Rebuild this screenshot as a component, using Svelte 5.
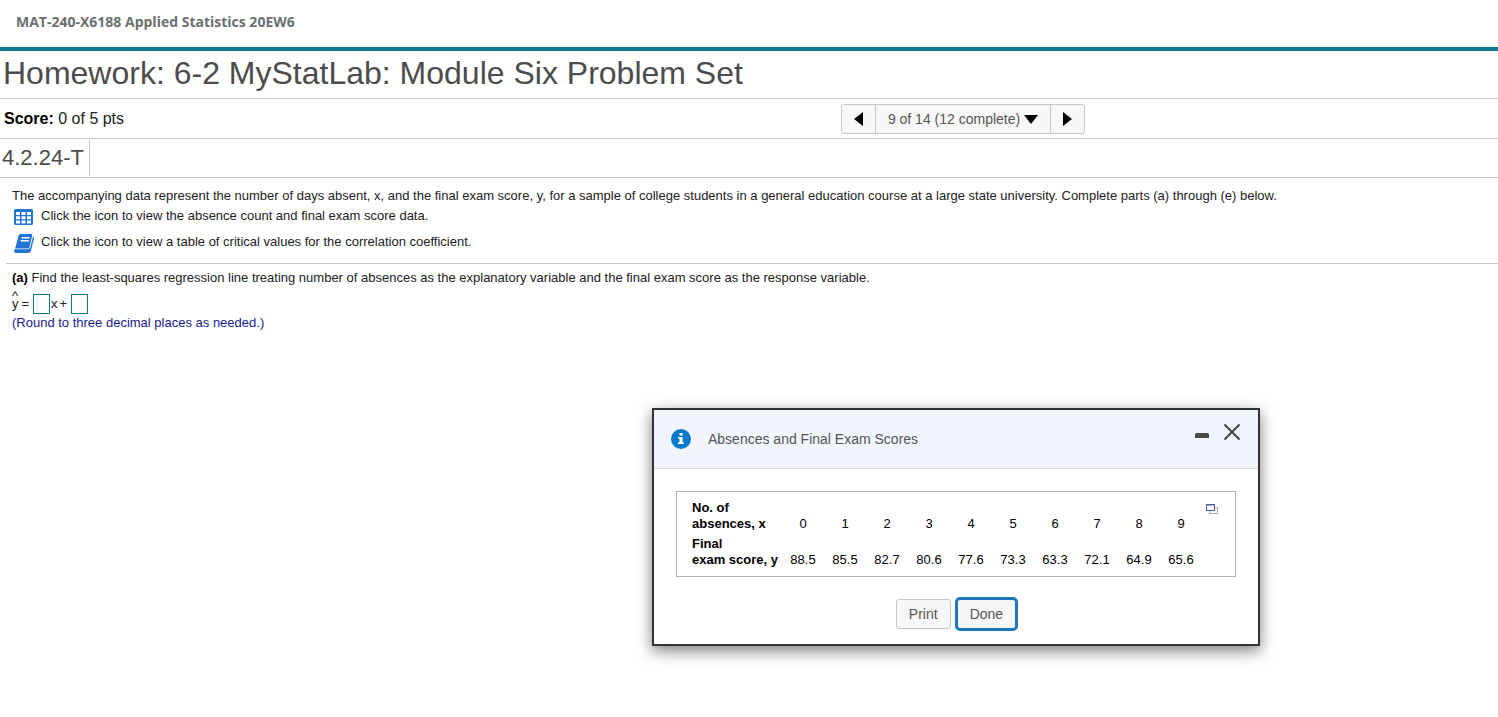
<script>
  const absences = [0, 1, 2, 3, 4, 5, 6, 7, 8, 9];
  const scores = ['88.5', '85.5', '82.7', '80.6', '77.6', '73.3', '63.3', '72.1', '64.9', '65.6'];

  let slope = $state('');
  let intercept = $state('');
  let open = $state(true);
</script>

<div class="page">
  <header class="course">MAT-240-X6188 Applied Statistics 20EW6</header>

  <h1>Homework: 6-2 MyStatLab: Module Six Problem Set</h1>

  <div class="score-row">
    <div class="score"><b>Score:</b> 0 of 5 pts</div>
    <nav class="pager">
      <button type="button" aria-label="Previous question">
        <svg width="10" height="14" viewBox="0 0 10 14"><path d="M10 0v14L1 7z" /></svg>
      </button>
      <button type="button" class="current">
        <span>9 of 14 (12 complete)</span>
        <svg width="14" height="10" viewBox="0 0 14 10"><path d="M0 1h14L7 10z" /></svg>
      </button>
      <button type="button" aria-label="Next question">
        <svg width="10" height="14" viewBox="0 0 10 14"><path d="M0 0v14l9-7z" /></svg>
      </button>
    </nav>
  </div>

  <div class="exercise-row">
    <h2>4.2.24-T</h2>
  </div>

  <main>
    <p class="intro">The accompanying data represent the number of days absent, x, and the final exam score, y, for a sample of college students in a general education course at a large state university. Complete parts (a) through (e) below.</p>
    <div class="resource">
      <button type="button" class="icon" aria-label="View data" onclick={() => (open = true)}>
        <svg width="20" height="17" viewBox="0 0 20 17">
          <rect width="19" height="16" rx="1.5" fill="#1f74d4" />
          <path fill="#fff" d="M2 3h4v3H2zM7.500 3h4v3h-4zM13 3h4v3h-4zM2 7.200h4v3H2zM7.500 7.200h4v3h-4zM13 7.200h4v3h-4zM2 11.400h4v3H2zM7.500 11.400h4v3h-4zM13 11.400h4v3h-4z" />
        </svg>
      </button>
      <span>Click the icon to view the absence count and final exam score data.</span>
    </div>
    <div class="resource book">
      <button type="button" class="icon" aria-label="View critical values">
        <svg width="20" height="19" viewBox="0 0 20 19">
          <path fill="#1f74d4" d="M6.500 0h10.500q1.600 0 1.200 1.500L15.500 13q-.4 1.500-2 1.500H1.200L4.600 1.500Q5 0 6.500 0z" />
          <path fill="#1f74d4" d="M19 2.500q1.200.8.900 2L17 16.500q-.6 2.500-2.800 2.500H2Q-.3 19 .1 16.500L.5 15.200H14q1.800 0 2.300-2z" />
          <path stroke="#fff" stroke-width="1.400" d="M7.500 3.800h8M6.800 6.800h8" />
        </svg>
      </button>
      <span>Click the icon to view a table of critical values for the correlation coefficient.</span>
    </div>

    <section>
      <p><b>(a)</b> Find the least-squares regression line treating number of absences as the explanatory variable and the final exam score as the response variable.</p>
      <div class="equation">
        <span class="hat">y</span>
        <span>=</span>
        <input type="text" aria-label="Slope" bind:value={slope} />
        <span class="term"><span>x</span><span>+</span></span>
        <input type="text" aria-label="Intercept" bind:value={intercept} />
      </div>
      <p class="hint">(Round to three decimal places as needed.)</p>
    </section>
  </main>

  {#if open}
    <div class="dialog" role="dialog" aria-labelledby="dialog-title">
      <div class="dialog-head">
        <svg width="20" height="20" viewBox="0 0 20 20">
          <circle cx="10" cy="10" r="10" fill="#0a7acb" />
          <path fill="#fff" d="M8.500 4h3v2.500h-3zM7 8h4.500v5.500H13V15H7v-1.500h1.500v-4H7z" />
        </svg>
        <h3 id="dialog-title">Absences and Final Exam Scores</h3>
        <button type="button" class="icon" aria-label="Minimize">
          <svg width="14" height="18" viewBox="0 0 14 18"><path fill="#4a4a4a" d="M0 15v-3.500q0-1.500 1.500-1.500h11q1.500 0 1.500 1.500V15z" /></svg>
        </button>
        <button type="button" class="icon" aria-label="Close" onclick={() => (open = false)}>
          <svg width="18" height="18" viewBox="0 0 18 18"><path stroke="#444" stroke-width="2" d="M1.500 1.500l15 15M16.500 1.500l-15 15" /></svg>
        </button>
      </div>

      <div class="data-box">
        <table>
          <tbody>
            <tr>
              <th scope="row">No. of<br />absences, x</th>
              {#each absences as n}<td>{n}</td>{/each}
            </tr>
            <tr>
              <th scope="row">Final<br />exam score, y</th>
              {#each scores as s}<td>{s}</td>{/each}
            </tr>
          </tbody>
        </table>
        <button type="button" class="icon copy" aria-label="Copy data">
          <svg width="12" height="10" viewBox="0 0 12 10" fill="#fff">
            <rect x="3.500" y="3.500" width="8" height="6" stroke="#a9adc4" />
            <rect x=".5" y=".5" width="8" height="6" stroke="#4f5d9c" />
            <path stroke="#4f5d9c" d="M0 1h9" />
          </svg>
        </button>
      </div>

      <div class="actions">
        <button type="button">Print</button>
        <button type="button" class="primary" onclick={() => (open = false)}>Done</button>
      </div>
    </div>
  {/if}
</div>

<style>
  :global(body) {
    margin: 0;
    background: #fff;
  }

  .page {
    font-family: "Liberation Sans", Arial, sans-serif;
    font-size: 13px;
    line-height: 16px;
    color: #222;
  }

  h1, h2, h3, p {
    margin: 0;
    font-weight: normal;
  }

  button {
    font-family: inherit;
    cursor: pointer;
  }

  svg {
    display: block;
  }

  .icon {
    padding: 0;
    border: none;
    background: none;
  }

  .course {
    padding: 12px 16px 15px;
    border-bottom: 4px solid #0d7890;
    font: bold 14px/20px "Open Sans", sans-serif;
    color: #6a7070;
  }

  h1 {
    padding: 2px 3px 5px;
    border-bottom: 1px solid #c7c9cb;
    font-size: 32px;
    line-height: 40px;
    color: #4c4c4c;
  }

  .score-row {
    display: flex;
    align-items: center;
    padding: 5px 0 4px;
    border-bottom: 1px solid #c7c9cb;
  }

  .score {
    box-sizing: border-box;
    width: 56%;
    padding-left: 4px;
    font-size: 16px;
    line-height: 20px;
  }

  .score b {
    color: #000;
  }

  .pager {
    display: flex;
    margin-left: 2px;
    border: 1px solid #c7c7c7;
    border-radius: 3px;
    background: #f7f7f7;
  }

  .pager button {
    display: flex;
    align-items: center;
    justify-content: center;
    gap: 4px;
    width: 33px;
    height: 28px;
    padding: 0;
    border: none;
    background: none;
    font-size: 14px;
    color: #555;
  }

  .pager .current {
    width: auto;
    padding: 0 12px;
    border: solid #c7c7c7;
    border-width: 0 1px;
  }

  .pager path {
    fill: #000;
  }

  .exercise-row {
    display: flex;
    padding: 1px 0;
    border-bottom: 1px solid #c7c9cb;
  }

  h2 {
    padding: 0 5px 0 2px;
    border-right: 1px solid #c7c9cb;
    font-size: 22px;
    line-height: 36px;
    color: #4c4c4c;
  }

  main {
    padding: 10px 0 0 6px;
  }

  .intro {
    padding-left: 6px;
  }

  .resource {
    display: flex;
    align-items: flex-start;
    gap: 7px;
    height: 16px;
    padding: 4px 0 0 8px;
  }

  .resource .icon {
    padding-top: 1px;
  }

  .resource.book {
    padding-top: 10px;
  }

  .resource.book .icon {
    padding-top: 0;
  }

  section {
    margin-top: 13px;
    padding: 6px 0 0 6px;
    border-top: 1px solid #c7c9cb;
  }

  section b {
    color: #000;
  }

  .equation {
    display: flex;
    align-items: center;
    padding: 8px 0 1px;
  }

  .equation input {
    box-sizing: border-box;
    width: 17px;
    height: 20px;
    padding: 0;
    border: 1px solid #12788c;
    background: #fff;
    font: inherit;
  }

  .equation input:first-of-type {
    margin-left: 4px;
  }

  .hat {
    position: relative;
    margin-right: 3px;
  }

  .hat::before {
    content: "^";
    position: absolute;
    top: -8px;
    left: 0;
  }

  .term {
    display: flex;
    gap: 2px;
    padding: 0 4px 0 1px;
  }

  .hint {
    color: #1a1a8c;
  }

  .dialog {
    position: absolute;
    top: 408px;
    left: 652px;
    box-sizing: border-box;
    width: 608px;
    border: 2px solid #333;
    background: #fff;
    box-shadow: 0 5px 14px rgba(0, 0, 0, 0.5);
  }

  .dialog-head {
    display: flex;
    align-items: center;
    padding: 0 17px;
    border-bottom: 1px solid #c9dcee;
    background: #f0f5fe;
  }

  h3 {
    flex: 1;
    padding-left: 17px;
    font-size: 14px;
    line-height: 58px;
    color: #555;
  }

  .dialog-head .icon {
    margin: 0 0 14px 14px;
  }

  .data-box {
    display: flex;
    align-items: flex-start;
    justify-content: space-between;
    margin: 22px;
    padding: 6px 17px 6px 15px;
    border: 1px solid #b3b3b3;
    color: #000;
  }

  table {
    border-collapse: collapse;
  }

  th,
  td {
    padding: 2px 0;
    vertical-align: bottom;
  }

  th {
    width: 90px;
    text-align: left;
  }

  td {
    width: 42px;
    text-align: center;
  }

  .copy {
    margin-top: 6px;
  }

  .actions {
    display: flex;
    justify-content: center;
    gap: 6px;
    padding-bottom: 15px;
  }

  .actions button {
    height: 30px;
    padding: 0 12px;
    border: 1px solid #c7c7c7;
    border-radius: 3px;
    background: #f7f7f7;
    font-size: 14px;
    color: #555;
  }

  .actions .primary {
    border-color: #1d72b8;
    box-shadow: 0 0 0 2px #1d78c0;
  }
</style>
